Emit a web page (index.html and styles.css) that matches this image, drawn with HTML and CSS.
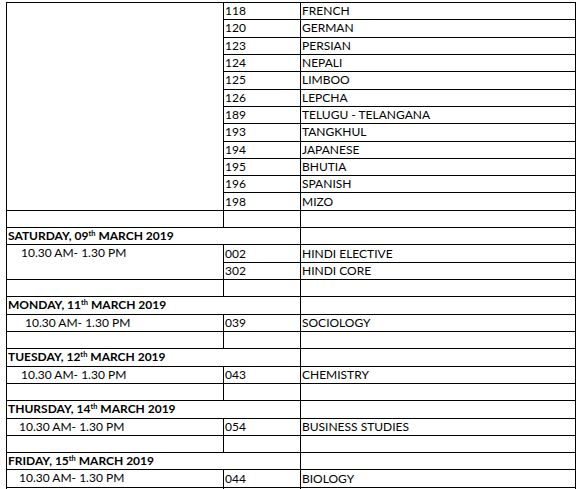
FILE: index.html
```html
<!DOCTYPE html>
<html>
<head>
<meta charset="utf-8">
<link rel="stylesheet" href="styles.css">
</head>
<body>
<table class="sheet">
  <colgroup>
    <col class="c1">
    <col class="c2">
    <col class="c3">
  </colgroup>
  <tbody>
    <tr><td class="merged" rowspan="12"></td><td>118</td><td>FRENCH</td></tr>
    <tr><td>120</td><td>GERMAN</td></tr>
    <tr><td>123</td><td>PERSIAN</td></tr>
    <tr><td>124</td><td>NEPALI</td></tr>
    <tr><td>125</td><td>LIMBOO</td></tr>
    <tr><td>126</td><td>LEPCHA</td></tr>
    <tr><td>189</td><td>TELUGU - TELANGANA</td></tr>
    <tr><td>193</td><td>TANGKHUL</td></tr>
    <tr><td>194</td><td>JAPANESE</td></tr>
    <tr><td>195</td><td>BHUTIA</td></tr>
    <tr><td>196</td><td>SPANISH</td></tr>
    <tr><td>198</td><td>MIZO</td></tr>
    <tr><td></td><td></td><td></td></tr>

    <tr><td class="date" colspan="2">SATURDAY, 09<sup>th</sup> MARCH 2019</td><td></td></tr>
    <tr><td class="time t20" rowspan="2">10.30 AM- 1.30 PM</td><td>002</td><td>HINDI ELECTIVE</td></tr>
    <tr><td>302</td><td>HINDI CORE</td></tr>
    <tr><td></td><td></td><td></td></tr>

    <tr><td class="date" colspan="2">MONDAY, 11<sup>th</sup> MARCH 2019</td><td></td></tr>
    <tr><td class="time t24">10.30 AM- 1.30 PM</td><td>039</td><td>SOCIOLOGY</td></tr>
    <tr><td></td><td></td><td></td></tr>

    <tr><td class="date" colspan="2">TUESDAY, 12<sup>th</sup> MARCH 2019</td><td></td></tr>
    <tr><td class="time t20">10.30 AM- 1.30 PM</td><td>043</td><td>CHEMISTRY</td></tr>
    <tr><td></td><td></td><td></td></tr>

    <tr><td class="date" colspan="2">THURSDAY, 14<sup>th</sup> MARCH 2019</td><td></td></tr>
    <tr><td class="time t18">10.30 AM- 1.30 PM</td><td>054</td><td>BUSINESS STUDIES</td></tr>
    <tr><td></td><td></td><td></td></tr>

    <tr><td class="date" colspan="2">FRIDAY, 15<sup>th</sup> MARCH 2019</td><td></td></tr>
    <tr><td class="time t18">10.30 AM- 1.30 PM</td><td>044</td><td>BIOLOGY</td></tr>
    <tr><td></td><td></td><td></td></tr>
  </tbody>
</table>
</body>
</html>
```

FILE: styles.css
```css
html, body {
  margin: 0;
  padding: 0;
  background: #fff;
}

.sheet {
  margin: 2px 0 0 6px;
  border-collapse: collapse;
  table-layout: fixed;
  width: 569px;
  font-family: Lato, "Liberation Sans", sans-serif;
  font-size: 12px;
  color: #000;
}

.c1 { width: 217px; }
.c2 { width: 77px; }
.c3 { width: 275px; }

.sheet td {
  border: 1px solid #000;
  height: 16.32px;
  padding: 0 0 0 1px;
  line-height: 16px;
  white-space: nowrap;
  overflow: hidden;
  vertical-align: middle;
}

.sheet td.date {
  font-weight: bold;
  padding-left: 1px;
}

.sheet td.time {
  vertical-align: top;
}

.t18 { padding-left: 12px !important; }
.t20 { padding-left: 14px !important; }
.t24 { padding-left: 18px !important; }

sup {
  font-size: 7.5px;
  line-height: 0;
  vertical-align: 4px;
}
```
